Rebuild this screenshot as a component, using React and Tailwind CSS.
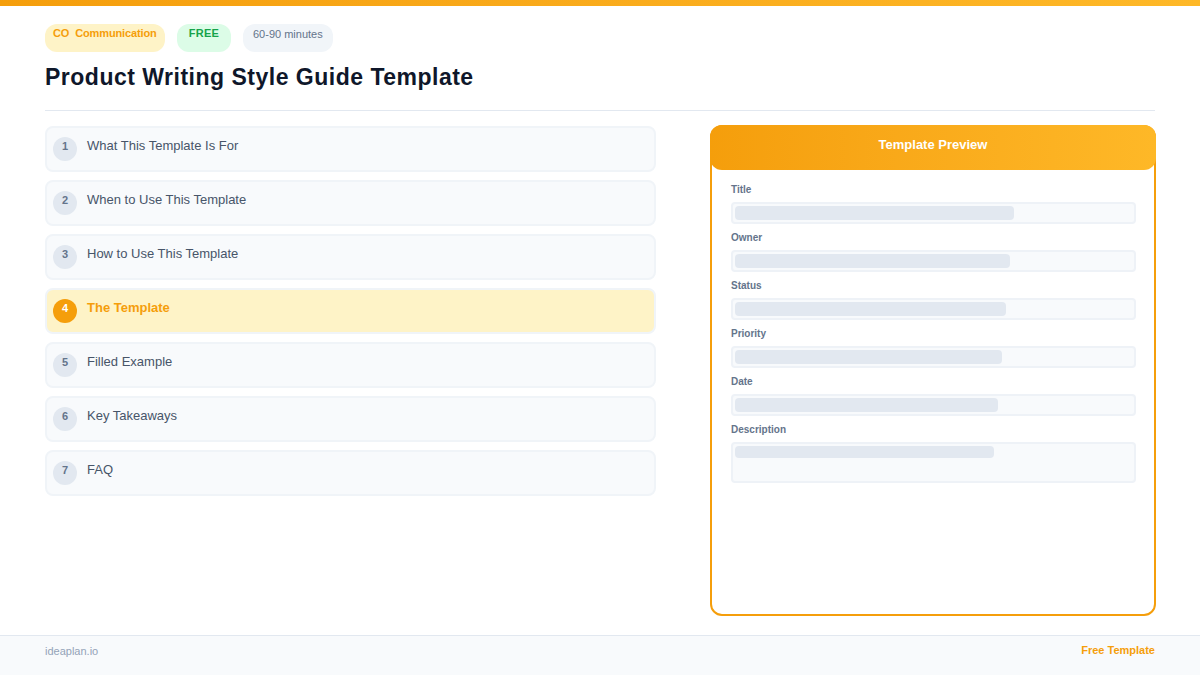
import React from "react";

const sections = [
  "What This Template Is For",
  "When to Use This Template",
  "How to Use This Template",
  "The Template",
  "Filled Example",
  "Key Takeaways",
  "FAQ",
];

const fields = [
  { label: "Title", bar: "w-[279px]" },
  { label: "Owner", bar: "w-[275px]" },
  { label: "Status", bar: "w-[271px]" },
  { label: "Priority", bar: "w-[267px]" },
  { label: "Date", bar: "w-[263px]" },
];

const App = () => {
  return (
    <div className="w-[1200px] h-[675px] flex flex-col bg-white overflow-hidden font-['Liberation_Sans',Arial,sans-serif]">
      {/* Top accent */}
      <div className="h-[6px] shrink-0 bg-gradient-to-r from-[#f59e0b] to-[#feb827]" />

      <div className="flex-1 min-h-0 flex flex-col px-[45px] pt-[18px]">
        {/* Badges */}
        <div className="flex gap-3">
          <span className="h-[28px] w-[120px] rounded-[12px] bg-[#fef3c7] pl-2 pt-[3px] text-[11px] leading-[13px] font-bold tracking-[-0.12px] text-[#f59e0b] whitespace-pre">
            CO  Communication
          </span>
          <span className="h-[28px] w-[54px] rounded-[12px] bg-[#dcfce7] text-center pt-[3px] text-[11px] leading-[13px] font-bold tracking-[0.3px] text-[#16a34a]">
            FREE
          </span>
          <span className="h-[28px] w-[90px] rounded-[12px] bg-[#f1f5f9] pl-[10px] pt-[4px] text-[11px] leading-[13px] text-[#64748b]">
            60-90 minutes
          </span>
        </div>

        <h1 className="mt-[10px] text-[23px] leading-[30px] font-bold tracking-[0.5px] text-[#0f172a]">
          Product Writing Style Guide Template
        </h1>

        <div className="mt-[18px] h-px w-[1110px] bg-[#e2e8f0]" />

        <div className="flex justify-between mt-[14px] w-[1111px]">
          {/* Section list */}
          <div className="w-[611px] mt-px flex flex-col gap-2">
            {sections.map((title, i) => {
              const active = i === 3;
              return (
                <div
                  key={title}
                  className={`h-[46px] flex items-start gap-[10px] pl-[6px] pt-[8px] rounded-lg border-2 border-[#f0f4f8] ${
                    active ? "bg-[#fef3c7]" : "bg-[#f8fafc]"
                  }`}
                >
                  <div
                    className={`w-6 h-6 mt-px shrink-0 rounded-full flex justify-center pt-[2px] text-[11px] leading-[14px] font-bold ${
                      active ? "bg-[#f59e0b] text-white" : "bg-[#e2e8f0] text-[#64748b]"
                    }`}
                  >
                    {i + 1}
                  </div>
                  <span
                    className={`mt-px text-[13px] leading-[18px] ${
                      active ? "font-bold text-[#f59e0b]" : "text-[#475569]"
                    }`}
                  >
                    {title}
                  </span>
                </div>
              );
            })}
          </div>

          {/* Preview card */}
          <div className="w-[446px] h-[491px] rounded-xl border-2 border-[#f59e0b]">
            <div className="-mx-[2px] -mt-[2px] h-[45px] rounded-xl bg-gradient-to-r from-[#f59e0b] to-[#feb827] text-center pt-[12px] text-[13px] leading-[16px] font-bold text-white">
              Template Preview
            </div>
            <div className="pl-[19px] pr-[18px] pt-[14px]">
              {fields.map((f) => (
                <div key={f.label} className="mb-2">
                  <div className="text-[10px] leading-[12px] font-bold text-[#64748b] mb-[6px]">{f.label}</div>
                  <div className="h-[22px] rounded border-2 border-[#eef2f7] bg-[#f8fafc] px-[2px] pt-[2px]">
                    <div className={`h-[14px] rounded-sm bg-[#e2e8f0] ${f.bar}`} />
                  </div>
                </div>
              ))}
              <div className="text-[10px] leading-[12px] font-bold text-[#64748b] mb-[6px]">Description</div>
              <div className="h-[41px] rounded border-2 border-[#eef2f7] bg-[#f8fafc] px-[2px] pt-[2px]">
                <div className="h-[12px] w-[259px] rounded-sm bg-[#e2e8f0]" />
              </div>
            </div>
          </div>
        </div>
      </div>

      {/* Footer */}
      <div className="h-[40px] shrink-0 border-t border-[#e2e8f0] bg-[#f8fafc] px-[45px] flex justify-between items-start pt-[8px]">
        <span className="text-[11px] leading-[14px] text-[#94a3b8]">ideaplan.io</span>
        <span className="text-[11px] leading-[13px] font-bold text-[#f59e0b]">Free Template</span>
      </div>
    </div>
  );
};

export default App;
